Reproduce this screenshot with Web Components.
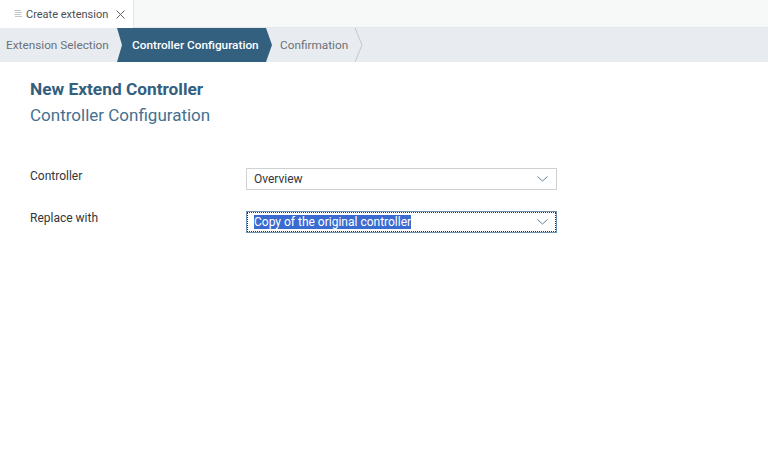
<!DOCTYPE html>
<html>
<head>
<meta charset="utf-8">
<style>
    html, body { margin: 0; height: 100%; background: #fff; }
    body { font-family: Roboto, "Noto Sans", sans-serif; overflow: hidden; }
</style>
</head>
<body>
<tab-bar label="Create extension"></tab-bar>
<wizard-steps></wizard-steps>
<form-page></form-page>

<script>
class TabBar extends HTMLElement {
    constructor() {
        super();
        this.attachShadow({ mode: 'open' });
        this.shadowRoot.innerHTML = `
            <style>
                :host { display: flex; height: 27px; background: #f7f8f8; border-bottom: 1px solid #e4e6e8; }
                #tab {
                    display: flex;
                    align-items: center;
                    width: 134px;
                    box-sizing: border-box;
                    height: 28px;
                    padding-left: 14px;
                    background: #fff;
                    border-right: 1px solid #e4e6e8;
                    font-size: 11px;
                    color: #4a4f55;
                }
                svg { display: block; flex: none; }
                #label { margin-left: 3px; white-space: nowrap; }
                #close { margin-left: 8px; }
            </style>
            <div id="tab">
                <svg width="9" height="10" viewBox="0 0 9 10" stroke="#c4c7c9" stroke-width="1" fill="none">
                    <path d="M0 1.5h7M1 3.5h7M0 5.5h7M1 7.5h7"/>
                </svg>
                <span id="label">${this.getAttribute('label') || ''}</span>
                <svg id="close" width="9" height="9" viewBox="0 0 9 9" stroke="#5d6368" stroke-width="1" fill="none">
                    <path d="M.5.5l8 8M8.5.5l-8 8"/>
                </svg>
            </div>
        `;
    }
}

class WizardSteps extends HTMLElement {
    constructor() {
        super();
        this.attachShadow({ mode: 'open' });
        this.shadowRoot.innerHTML = `
            <style>
                :host { display: block; height: 34px; background: #e8ecf0; position: relative; font-size: 11.8px; color: #6b7178; }
                #row { display: flex; height: 34px; align-items: center; white-space: nowrap; }
                #first { width: 117px; padding-left: 6px; box-sizing: border-box; }
                #active {
                    width: 156px;
                    height: 34px;
                    box-sizing: border-box;
                    padding-left: 15px;
                    line-height: 34px;
                    background: #34607f;
                    color: #fff;
                    font-weight: 500;
                    clip-path: polygon(0 0, 149px 0, 155px 17px, 149px 34px, 0 34px, 5px 17px);
                }
                #last { margin-left: 7px; }
                svg { position: absolute; left: 354px; top: 0; }
            </style>
            <div id="row">
                <div id="first">Extension Selection</div>
                <div id="active">Controller Configuration</div>
                <div id="last">Confirmation</div>
            </div>
            <svg width="10" height="34" viewBox="0 0 10 34" fill="none" stroke="#c3c7cb" stroke-width="1">
                <path d="M1 0l7 17-7 17"/>
            </svg>
        `;
    }
}

class FormRow extends HTMLElement {
    constructor() {
        super();
        this.attachShadow({ mode: 'open' });
        const focused = this.hasAttribute('focused');
        this.shadowRoot.innerHTML = `
            <style>
                :host { display: grid; grid-template-columns: 216px 311px; height: 22px; font-size: 12px; color: #32363a; }
                #label { line-height: 15px; padding-top: ${focused ? 0 : 1}px; }
                #select {
                    display: flex;
                    align-items: center;
                    justify-content: space-between;
                    box-sizing: border-box;
                    height: 22px;
                    padding: 0 8px 0 7px;
                    background: #fff;
                    border: 1px solid ${focused ? '#6f93b0' : '#cfd1d2'};
                    position: relative;
                    color: #32363a;
                }
                #select.focused::after {
                    content: "";
                    position: absolute;
                    inset: 0;
                    border: 1px dotted #333;
                }
                #select.focused span { background: #3a6bd0; color: #fff; }
                svg { display: block; }
            </style>
            <div id="label">${this.getAttribute('label')}</div>
            <div id="select" class="${focused ? 'focused' : ''}">
                <span>${this.getAttribute('value')}</span>
                <svg width="11" height="6" viewBox="0 0 11 6" fill="none" stroke="#5f7f99" stroke-width="1"><path d="M.5.5l5 4.5 5-4.5"/></svg>
            </div>
        `;
    }
}

class FormPage extends HTMLElement {
    constructor() {
        super();
        this.attachShadow({ mode: 'open' });
        this.shadowRoot.innerHTML = `
            <style>
                :host { display: block; padding: 16px 30px 0; }
                h1 { margin: 0; font-size: 17.3px; line-height: 22px; font-weight: 700; color: #34607f; }
                h2 { margin: 4px 0 0; font-size: 17px; line-height: 22px; font-weight: 400; color: #45708f; }
                #fields { display: grid; row-gap: 21px; margin-top: 42px; }
            </style>
            <h1>New Extend Controller</h1>
            <h2>Controller Configuration</h2>
            <div id="fields">
                <form-row label="Controller" value="Overview"></form-row>
                <form-row label="Replace with" value="Copy of the original controller" focused></form-row>
            </div>
        `;
    }
}

customElements.define('tab-bar', TabBar);
customElements.define('wizard-steps', WizardSteps);
customElements.define('form-row', FormRow);
customElements.define('form-page', FormPage);
</script>
</body>
</html>
